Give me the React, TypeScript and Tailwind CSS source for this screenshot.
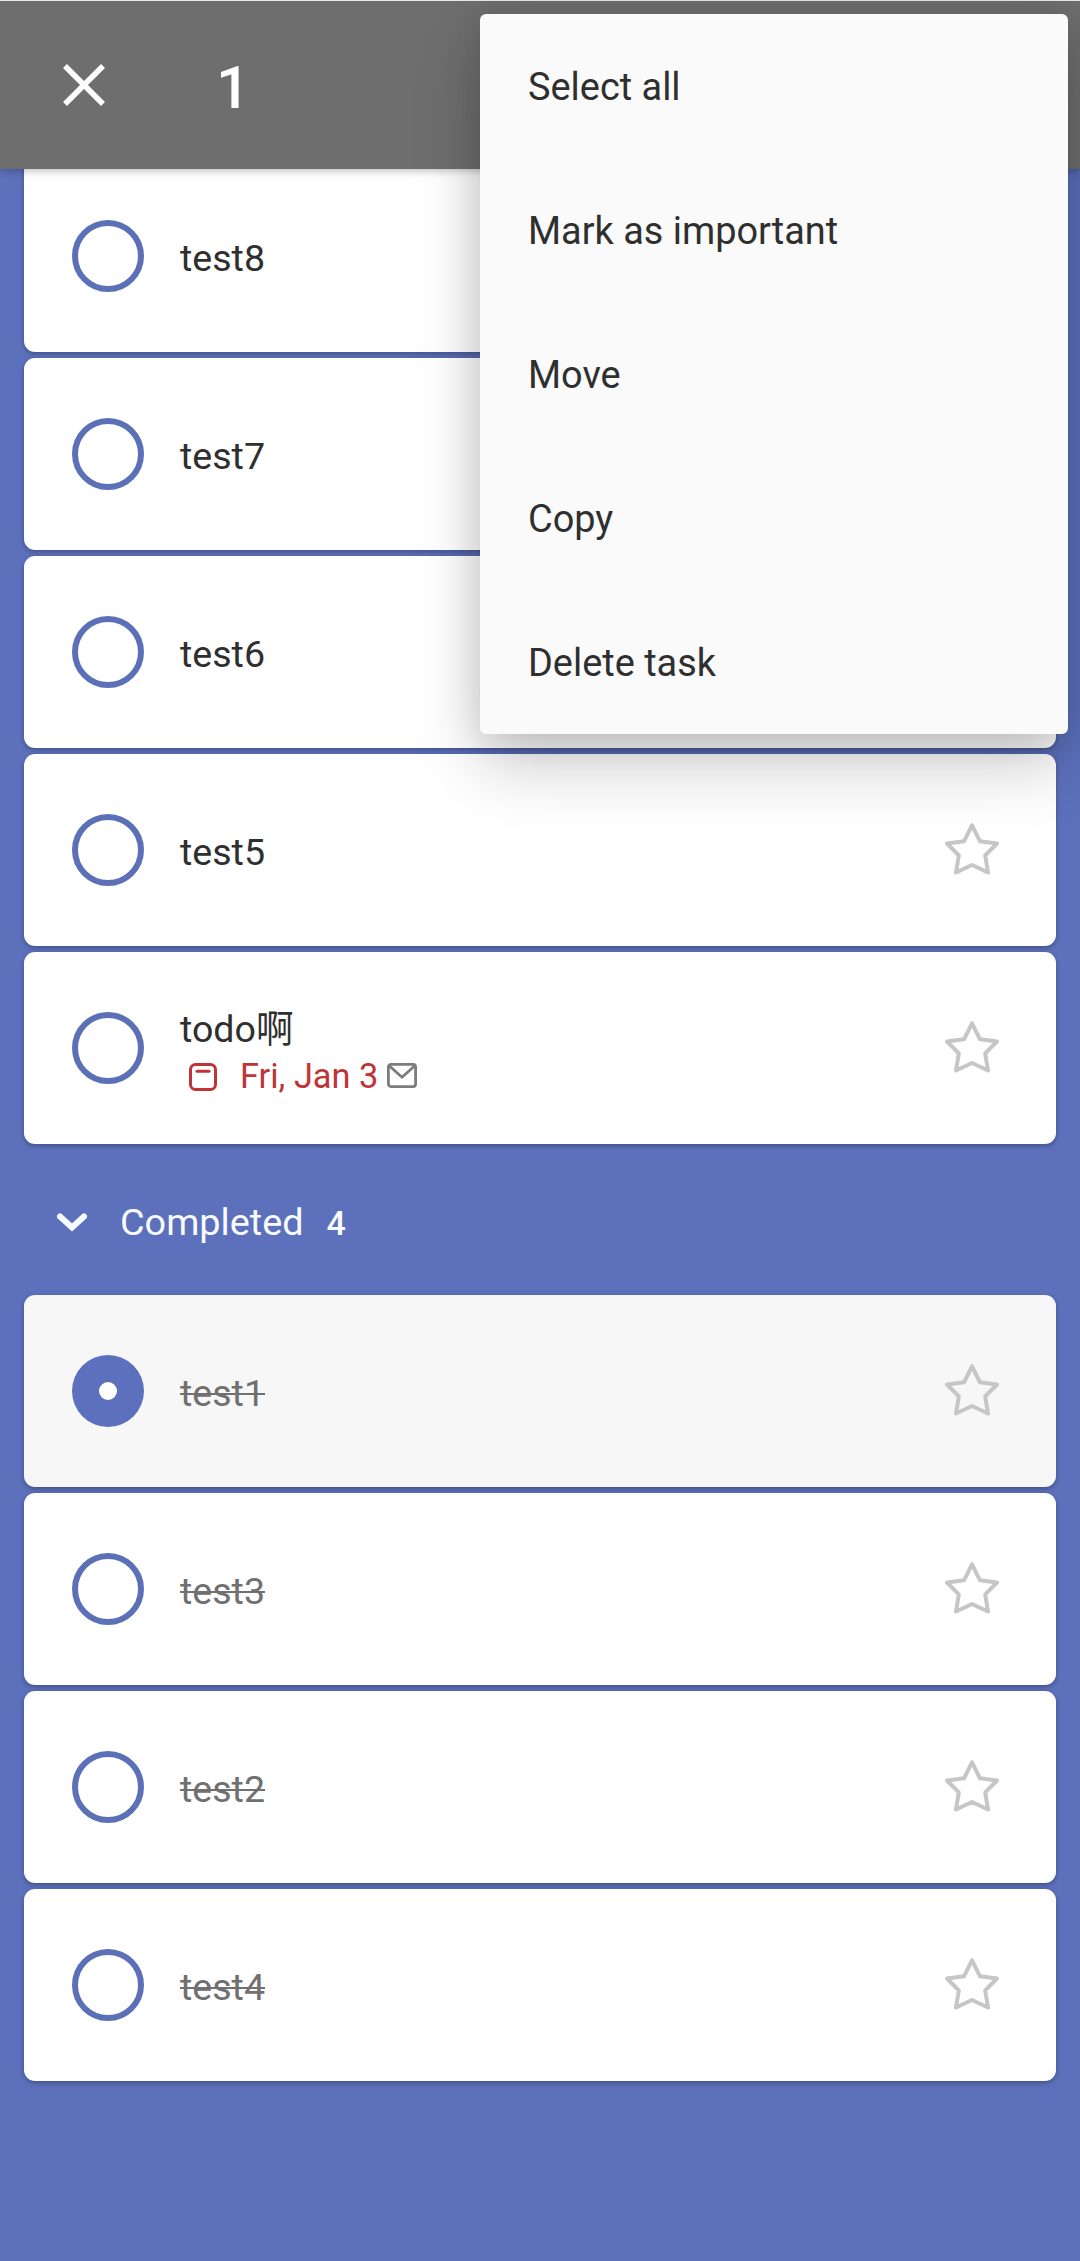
import clsx from "clsx";

interface Task {
  title: string;
  due?: string;
  selected?: boolean;
}

const openTasks: Task[] = [
  { title: "test8" },
  { title: "test7" },
  { title: "test6" },
  { title: "test5" },
  { title: "todo啊", due: "Fri, Jan 3" },
];

const completedTasks: Task[] = [
  { title: "test1", selected: true },
  { title: "test3" },
  { title: "test2" },
  { title: "test4" },
];

const menuItems = ["Select all", "Mark as important", "Move", "Copy", "Delete task"];

function StarIcon() {
  return (
    <svg width="54" height="54" viewBox="0 0 54 54" fill="none" stroke="#c6c6c6" strokeWidth="4" strokeLinejoin="round">
      <path d="M27 2.3 L35 18.3 L52 20.5 L40.2 32.4 L43 49.5 L27 42 L11 49.5 L13.8 32.4 L2 20.5 L19 18.3 Z" />
    </svg>
  );
}

function CalendarIcon() {
  return (
    <svg width="28" height="28" viewBox="0 0 28 28" fill="none" stroke="#c03438" strokeWidth="3" strokeLinecap="round">
      <rect x="1.5" y="1.5" width="25" height="25" rx="5" />
      <path d="M8 8.3H20" />
    </svg>
  );
}

function MailIcon() {
  return (
    <svg width="30" height="25" viewBox="0 0 30 25" fill="none" stroke="#7c7c7c" strokeWidth="2.8" strokeLinejoin="round">
      <rect x="1.4" y="1.4" width="27.2" height="22.2" rx="2.5" />
      <path d="M2.5 3 L15 14.2 L27.5 3" />
    </svg>
  );
}

function TaskRow({ task, done }: { task: Task; done?: boolean }) {
  return (
    <div
      className={clsx(
        "h-48 flex items-center pl-12 pr-[57px] rounded-[11px] shadow-[0_2px_5px_rgba(0,0,0,0.28)]",
        task.selected ? "bg-[#f7f7f7]" : "bg-white"
      )}
    >
      {task.selected ? (
        <span className="size-[72px] rounded-full bg-[#5c70be] flex items-center justify-center">
          <span className="size-[18px] rounded-full bg-white" />
        </span>
      ) : (
        <span className="size-[72px] rounded-full border-6 border-[#5c70b8]" />
      )}
      <div className={clsx("ml-9 flex-1", task.due ? "pt-[14px]" : "pt-1")}>
        <p className={clsx("text-[37.6px] leading-[44px]", done ? "text-[#707070] line-through decoration-2" : "text-[#2f2f2f]")}>
          {task.title}
        </p>
        {task.due && (
          <div className="flex items-center pl-[9px] h-[53px] text-[#c03438]">
            <CalendarIcon />
            <span className="ml-[23px] mr-[9px] text-[34.4px]">{task.due}</span>
            <span className="-mt-[3px]">
              <MailIcon />
            </span>
          </div>
        )}
      </div>
      <StarIcon />
    </div>
  );
}

export default function App() {
  return (
    <div className="relative h-[2261px] w-[1080px] overflow-hidden bg-[#5c70bc] font-[Roboto,'Noto_Sans_CJK_SC',sans-serif]">
      <header className="relative z-10 h-[169px] border-t border-[#e4e8e8] bg-[#6e6e6e] flex items-center pl-[63px] text-white shadow-[0_2px_8px_rgba(0,0,0,0.25)]">
        <svg width="42" height="42" viewBox="0 0 42 42" stroke="#fff" strokeWidth="5.6">
          <path d="M2 2 L40 40 M40 2 L2 40" />
        </svg>
        <span className="ml-[111px] pt-[5px] text-[60px] font-medium">1</span>
      </header>

      <main className="-mt-[9px] px-6">
        <div className="flex flex-col gap-1.5">
          {openTasks.map((task) => (
            <TaskRow key={task.title} task={task} />
          ))}
        </div>

        <div className="h-[151px] flex items-center pl-[33px] pt-1.5 text-[#f8fbff]">
          <svg width="30" height="19" viewBox="0 0 30 19" fill="none" stroke="currentColor" strokeWidth="6" strokeLinecap="round">
            <path d="M3 3.5 L15 14.5 L27 3.5" />
          </svg>
          <span className="ml-[33px] text-[37.8px]">Completed</span>
          <span className="ml-[23px] pt-[2px] text-[34px] font-medium">4</span>
        </div>

        <div className="flex flex-col gap-1.5">
          {completedTasks.map((task) => (
            <TaskRow key={task.title} task={task} done />
          ))}
        </div>
      </main>

      <ul className="absolute z-20 top-[14px] right-3 w-[588px] rounded-md bg-[#fafafa] shadow-[0_32px_68px_rgba(0,0,0,0.2),0_4px_36px_rgba(0,0,0,0.12)]">
        {menuItems.map((item) => (
          <li key={item} className="h-36 flex items-center px-12 pt-[3px] text-[37.9px] text-[#2f2f2f]">
            {item}
          </li>
        ))}
      </ul>
    </div>
  );
}
